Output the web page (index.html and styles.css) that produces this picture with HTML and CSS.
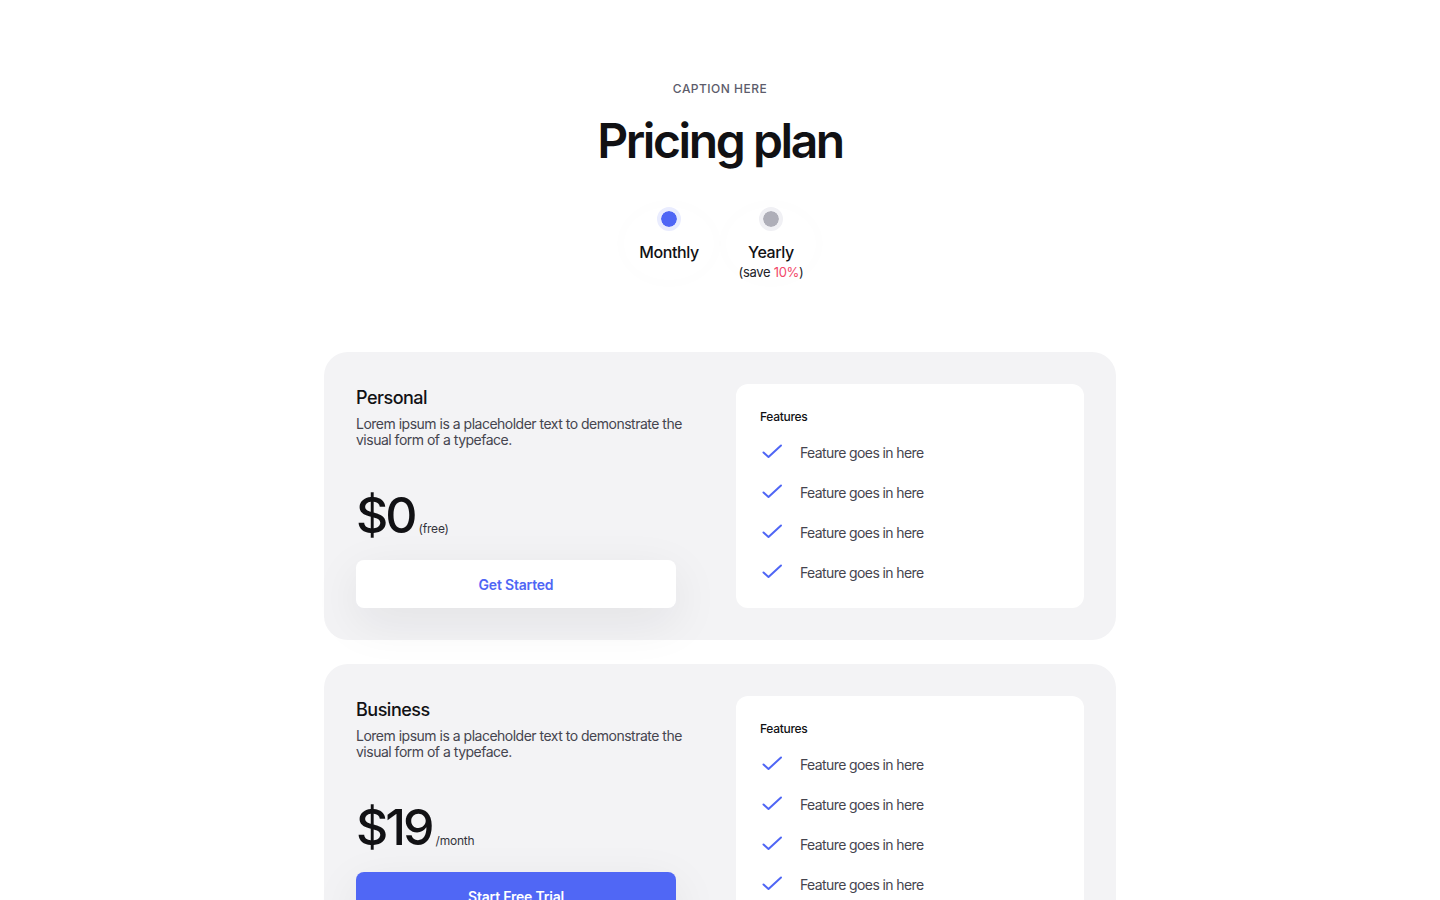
FILE: index.html
```html
<!DOCTYPE html>
<html lang="en">
<head>
<meta charset="utf-8">
<title>Pricing plan</title>
<link rel="stylesheet" href="styles.css">
</head>
<body>
<header class="header">
  <p class="caption">CAPTION HERE</p>
  <h1 class="title">Pricing plan</h1>
  <div class="toggle">
    <div class="option">
      <span class="dot dot-active"></span>
      <span class="option-label">Monthly</span>
    </div>
    <div class="option">
      <span class="dot"></span>
      <span class="option-label">Yearly</span>
      <span class="option-note">(save <span class="accent">10%</span>)</span>
    </div>
  </div>
</header>

<main class="plans">
  <section class="card">
    <div class="plan-info">
      <h2 class="plan-name">Personal</h2>
      <p class="plan-desc">Lorem ipsum is a placeholder text to demonstrate the visual form of a typeface.</p>
      <div class="price-row">
        <span class="price">$0</span>
        <span class="price-unit">(free)</span>
      </div>
      <button class="btn btn-light">Get Started</button>
    </div>
    <div class="features">
      <h3 class="features-title">Features</h3>
      <ul class="feature-list">
        <li class="feature"><svg class="check" viewBox="0 0 24 24"><polyline points="3.5,12.5 8.5,17 21,5.5"/></svg><span>Feature goes in here</span></li>
        <li class="feature"><svg class="check" viewBox="0 0 24 24"><polyline points="3.5,12.5 8.5,17 21,5.5"/></svg><span>Feature goes in here</span></li>
        <li class="feature"><svg class="check" viewBox="0 0 24 24"><polyline points="3.5,12.5 8.5,17 21,5.5"/></svg><span>Feature goes in here</span></li>
        <li class="feature"><svg class="check" viewBox="0 0 24 24"><polyline points="3.5,12.5 8.5,17 21,5.5"/></svg><span>Feature goes in here</span></li>
      </ul>
    </div>
  </section>

  <section class="card">
    <div class="plan-info">
      <h2 class="plan-name">Business</h2>
      <p class="plan-desc">Lorem ipsum is a placeholder text to demonstrate the visual form of a typeface.</p>
      <div class="price-row">
        <span class="price">$19</span>
        <span class="price-unit">/month</span>
      </div>
      <button class="btn btn-primary">Start Free Trial</button>
    </div>
    <div class="features">
      <h3 class="features-title">Features</h3>
      <ul class="feature-list">
        <li class="feature"><svg class="check" viewBox="0 0 24 24"><polyline points="3.5,12.5 8.5,17 21,5.5"/></svg><span>Feature goes in here</span></li>
        <li class="feature"><svg class="check" viewBox="0 0 24 24"><polyline points="3.5,12.5 8.5,17 21,5.5"/></svg><span>Feature goes in here</span></li>
        <li class="feature"><svg class="check" viewBox="0 0 24 24"><polyline points="3.5,12.5 8.5,17 21,5.5"/></svg><span>Feature goes in here</span></li>
        <li class="feature"><svg class="check" viewBox="0 0 24 24"><polyline points="3.5,12.5 8.5,17 21,5.5"/></svg><span>Feature goes in here</span></li>
      </ul>
    </div>
  </section>
</main>
</body>
</html>
```

FILE: styles.css
```css
* { box-sizing: border-box; }

body {
  margin: 0;
  background: #ffffff;
  font-family: Inter, "Noto Sans", "Liberation Sans", sans-serif;
  color: #111114;
}

.header {
  padding-top: 81px;
  display: flex;
  flex-direction: column;
  align-items: center;
}

.caption {
  margin: 0;
  font-size: 12px;
  line-height: 16px;
  font-weight: 500;
  letter-spacing: 0.04em;
  color: #5c5c6b;
}

.title {
  margin: 14px 0 0;
  font-size: 48px;
  line-height: 60px;
  font-weight: 600;
  letter-spacing: -2.4px;
  color: #111114;
}

.toggle {
  margin-top: 36px;
  display: flex;
  gap: 12px;
}

.option {
  width: 90px;
  display: flex;
  flex-direction: column;
  align-items: center;
  border-radius: 50%;
  box-shadow: 0 0 16px 4px rgba(20, 20, 40, 0.012);
}

.dot {
  width: 24px;
  height: 24px;
  border-radius: 50%;
  background: #aeaeb8;
  border: 4px solid #f0f0f4;
  background-clip: padding-box;
}

.dot-active {
  background: #4f66f5;
  border-color: #e9ecfe;
  background-clip: padding-box;
}

.option-label {
  margin-top: 11px;
  font-size: 16px;
  line-height: 20px;
  font-weight: 500;
  letter-spacing: -0.4px;
  color: #111114;
}

.option-note {
  margin-top: 2px;
  font-size: 13px;
  line-height: 16px;
  letter-spacing: -0.3px;
  color: #222228;
}

.accent { color: #f2476a; }

.plans {
  width: 792px;
  margin: 72px auto 0;
  display: flex;
  flex-direction: column;
  gap: 24px;
  padding-bottom: 40px;
}

.card {
  display: flex;
  gap: 60px;
  padding: 32px;
  background: #f3f3f5;
  border-radius: 24px;
}

.plan-info {
  width: 320px;
  display: flex;
  flex-direction: column;
}

.plan-name {
  margin: 0;
  padding-top: 2px;
  font-size: 18px;
  line-height: 24px;
  font-weight: 500;
  letter-spacing: -0.5px;
  color: #111114;
}

.plan-desc {
  margin: 6px 0 0;
  width: 336px;
  font-size: 14px;
  line-height: 16px;
  letter-spacing: -0.5px;
  color: #45454f;
}

.price-row {
  margin-top: auto;
  display: flex;
  align-items: baseline;
  gap: 4px;
}

.price {
  font-size: 50px;
  line-height: 50px;
  font-weight: 500;
  letter-spacing: -3px;
  color: #111114;
}

.price-unit {
  font-size: 12px;
  line-height: 16px;
  letter-spacing: -0.2px;
  color: #33333b;
}

.btn {
  margin-top: 20px;
  height: 48px;
  width: 100%;
  flex-shrink: 0;
  border: none;
  border-radius: 8px;
  font-family: inherit;
  font-size: 14px;
  font-weight: 600;
  letter-spacing: -0.2px;
  cursor: pointer;
}

.btn-light {
  background: #ffffff;
  color: #4f66f5;
  box-shadow: 0 14px 48px rgba(20, 20, 40, 0.08);
}

.btn-primary {
  background: #5067f5;
  color: #ffffff;
  box-shadow: 0 14px 48px rgba(20, 20, 40, 0.08);
}

.features {
  width: 348px;
  padding: 25px 24px 24px;
  background: #ffffff;
  border-radius: 12px;
}

.features-title {
  margin: 0;
  font-size: 12px;
  line-height: 16px;
  font-weight: 500;
  letter-spacing: -0.3px;
  color: #111114;
}

.feature-list {
  list-style: none;
  margin: 15px 0 0;
  padding: 0;
  display: flex;
  flex-direction: column;
  gap: 16px;
}

.feature {
  display: flex;
  align-items: center;
  gap: 16px;
  height: 24px;
  font-size: 14px;
  letter-spacing: -0.6px;
  color: #45454f;
}

.check {
  width: 24px;
  height: 24px;
  fill: none;
  stroke: #4f66f5;
  stroke-width: 2;
  stroke-linecap: round;
  stroke-linejoin: round;
}
```
